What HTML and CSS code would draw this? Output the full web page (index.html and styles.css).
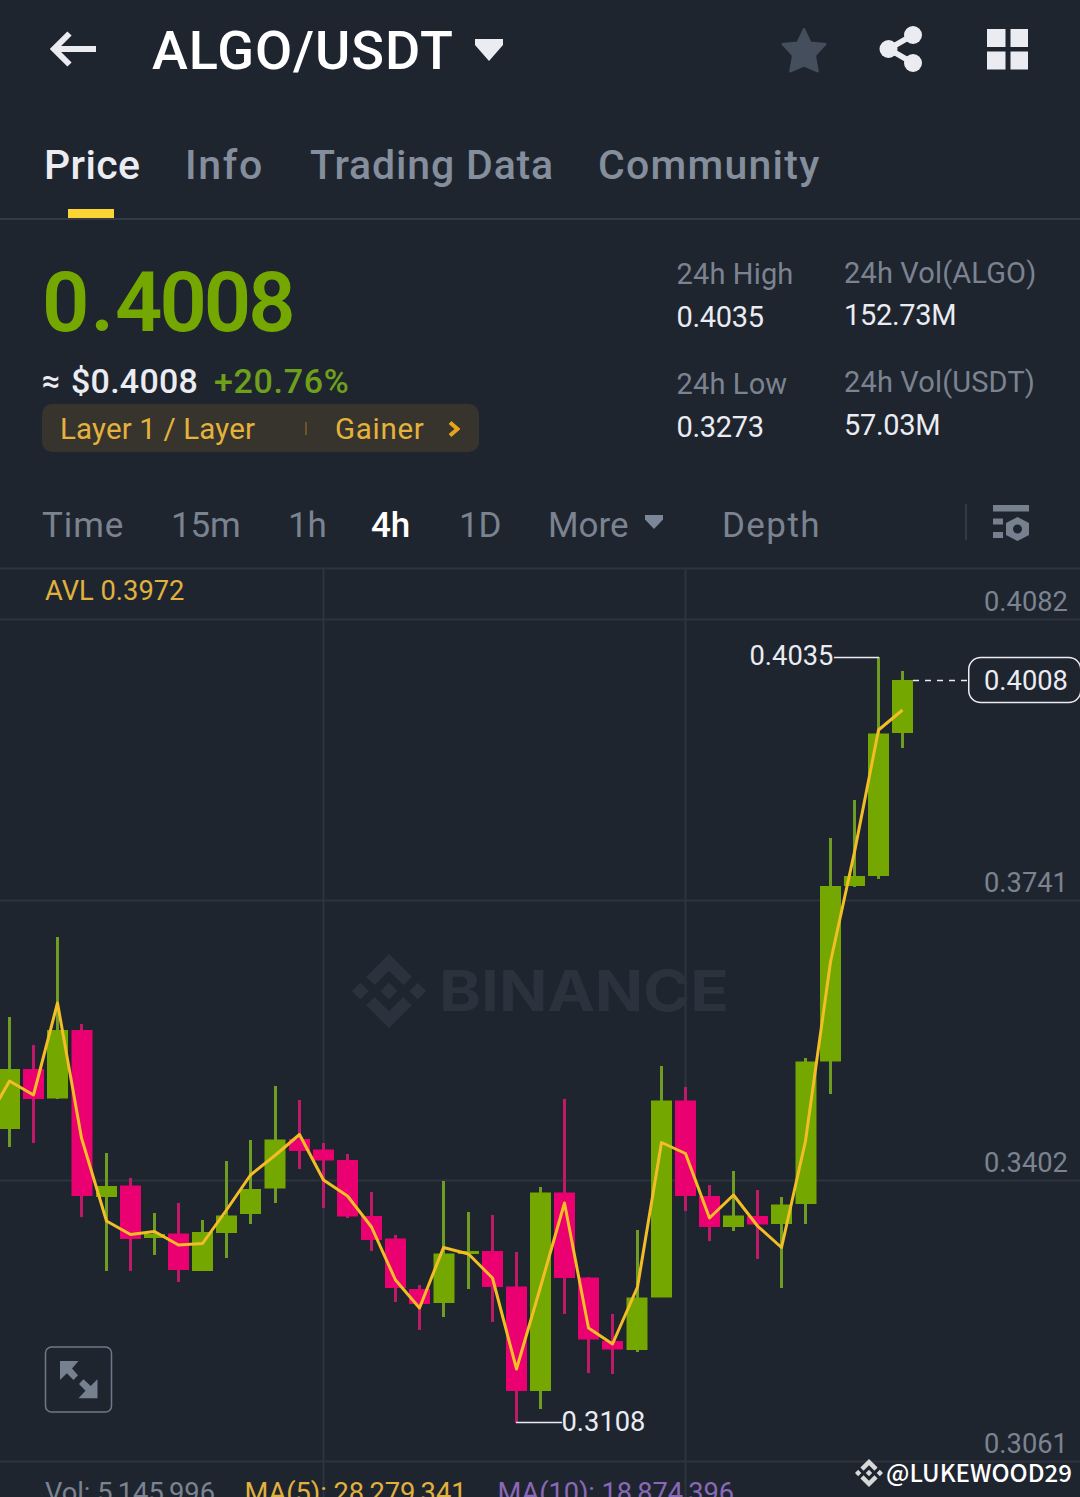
FILE: index.html
```html
<!DOCTYPE html>
<html lang="en">
<head>
<meta charset="utf-8">
<title>ALGO/USDT</title>
<link rel="stylesheet" href="styles.css">
</head>
<body>
<main class="app">
  <header class="topbar">
    <svg class="back" viewBox="0 0 48 38"><path d="M47 19H6M20.500 3.500L5 19l15.500 15.500"/></svg>
    <h1 class="pair">ALGO/USDT</h1>
    <svg class="pair-caret" viewBox="0 0 28 22"><path d="M0 0h28v6L14 22 0 6z"/></svg>
    <div class="actions">
      <svg class="star" viewBox="0 0 46 46"><path d="M23 2l6.500 13.500 15 1.500-10.500 11.500 2.800 16L23 38.500 9.200 44.500l2.800-16L1.500 17l15-1.500z"/></svg>
      <svg class="share" viewBox="0 0 44 46"><path d="M34 9L9.500 23 34 37"/><circle cx="9.500" cy="23" r="9"/><circle cx="34" cy="9" r="9"/><circle cx="34" cy="37" r="9"/></svg>
      <svg class="tiles" viewBox="0 0 42 41"><path d="M0 0h18.500v18H0zM23.500 0h17.500v18H23.500zM0 22.500h18.500v18H0zM23.500 22.500h17.500v18H23.500z"/></svg>
    </div>
  </header>

  <nav class="tabs">
    <a class="tab active">Price</a>
    <a class="tab info">Info</a>
    <a class="tab">Trading Data</a>
    <a class="tab community">Community</a>
  </nav>

  <section class="summary">
    <div class="quote">
      <div class="last">0<span class="dot">.</span>4008</div>
      <div class="fiat"><span class="approx">≈</span><span class="usd">$0.4008</span><span class="change">+20.76%</span></div>
      <div class="tags">
        <span class="tag-a">Layer 1 / Layer</span><i class="tag-sep"></i><span class="tag-b">Gainer</span>
        <svg class="chevron" viewBox="0 0 12 16"><path d="M2 1.500l7.500 6.500-7.500 6.500"/></svg>
      </div>
    </div>
    <dl class="stats">
      <div class="stat"><dt>24h High</dt><dd>0.4035</dd></div>
      <div class="stat"><dt>24h Low</dt><dd>0.3273</dd></div>
    </dl>
    <dl class="stats volumes">
      <div class="stat"><dt>24h Vol(ALGO)</dt><dd>152.73M</dd></div>
      <div class="stat"><dt>24h Vol(USDT)</dt><dd>57.03M</dd></div>
    </dl>
  </section>

  <nav class="frames">
    <a class="wide">Time</a>
    <a>15m</a>
    <a>1h</a>
    <a class="on">4h</a>
    <a>1D</a>
    <a class="more">More<svg viewBox="0 0 18 14"><path d="M0 0h18v4.500L9 14 0 4.500z"/></svg></a>
    <a class="wide depth">Depth</a>
    <i class="rule"></i>
    <svg class="settings" viewBox="0 0 36 36"><path d="M0 0h36v6.500H0zM0 13.500h10v6H0zM0 27h10v6H0zM24.500 12l11.500 6v12l-11.500 6-11.500-6V18zM24.500 19.500a4.500 4.500 0 100 9 4.500 4.500 0 000-9z"/></svg>
  </nav>

  <svg class="chart" viewBox="0 567 1080 930">
    <defs>
      <path id="mark" d="M38.730 53.200l24.590-24.580 24.600 24.600 14.300-14.310L63.320 0l-38.900 38.900zM0 63.310L14.300 49l14.310 14.310-14.310 14.300zM38.730 73.410L63.320 98l24.600-24.600 14.310 14.290-38.900 38.910-38.910-38.880zM98 63.310L112.310 49l14.300 14.300-14.310 14.320zM77.830 63.300L63.320 48.780 48.810 63.280l14.510 14.500z"/>
    </defs>
    <path class="grid" d="M0 568.500H1080M0 619.500H1080M0 900.500H1080M0 1180.500H1080M0 1461.500H1080M323.500 569V1497M685.500 569V1497"/>
    <g class="brand">
      <use href="#mark" transform="translate(352 954) scale(.585)"/>
      <text x="439" y="1011" textLength="290" lengthAdjust="spacingAndGlyphs">BINANCE</text>
    </g>
    <path class="wick up" d="M9.500 1017V1147M57.500 937V1099M106.500 1153V1271M154.500 1213V1255M202.500 1220V1271M226.500 1161V1258M250.500 1140V1224M275.500 1086V1203M443.500 1181V1317M468.500 1212V1289M540.500 1187V1409M637.500 1230V1352M661.500 1066V1297M733.500 1171V1231M781.500 1197V1288M805.500 1058V1224M830.500 838V1094M854.500 800V887M878.500 657V879M902.500 671V748"/>
    <path class="wick down" d="M33.500 1045V1143M81.500 1024V1217M130.500 1178V1271M178.500 1203V1282M299.500 1100V1169M323.500 1143V1208M347.500 1154V1218M371.500 1192V1251M395.500 1235V1302M419.500 1285V1330M492.500 1215V1322M516.500 1252V1423M564.500 1099V1314M588.500 1277V1373M612.500 1314V1374M685.500 1087V1211M709.500 1185V1241M757.500 1190V1259"/>
    <path class="body up" d="M9.500 1069V1129M57.500 1030V1098.500M106.500 1186V1197M154.500 1234V1238M202.500 1232V1271M226.500 1215.500V1233M250.500 1189V1214M275 1139.500V1188.500M444 1253.500V1303M468.500 1251V1254M540.500 1192.500V1391M637 1297.500V1350M661.500 1100.500V1297.500M733.500 1215.500V1227M781.500 1204.500V1224M806 1061.500V1204M830.500 886V1061.500M854.500 876V886M878.500 733.500V876M902.500 680V733"/>
    <path class="body down" d="M33.500 1069V1099M82 1030V1196M130.500 1185.500V1239M178.500 1233.500V1270M299.500 1139V1151M323.500 1149.500V1160.500M347.500 1160V1216.500M371.500 1216V1240M395.500 1238.500V1288M419.500 1289V1304M492.500 1251V1287M516.500 1286.500V1391M564.500 1192.500V1278M588.500 1277.500V1339.500M612.500 1341V1349.500M685.500 1100.500V1196M709.500 1196V1227M757.500 1216V1224.500"/>
    <polyline class="avg" points="-1,1099.500 9.500,1081 33.500,1095 57.500,1003 81.500,1138 106.500,1221 130.500,1234.500 154.500,1231.500 178.500,1245 202.500,1243.500 226.500,1210 250.500,1175 275.500,1155 299.500,1134.500 323.500,1180 347.500,1196 371.500,1227 395.500,1280 419.500,1308 443.500,1247.500 468.500,1254 492.500,1278 516.500,1369 540.500,1287 564.500,1203 588.500,1328 612.500,1344 637.500,1287 661.500,1142.500 685.500,1153.500 709.500,1218 733.500,1195 757.500,1226 781.500,1247.500 805.500,1141 830.500,962 854.500,852 878.500,730 902.500,710"/>
    <path class="callout" d="M834 657.500H879M516 1422.500H562"/>
    <path class="callout dashed" d="M913 680.500H968"/>
    <rect class="callout box" x="968.750" y="657.500" width="112" height="45" rx="12"/>
    <g class="axis">
      <text x="984" y="611">0.4082</text>
      <text x="984" y="892">0.3741</text>
      <text x="984" y="1172">0.3402</text>
      <text x="984" y="1453">0.3061</text>
    </g>
    <g class="marks">
      <text x="749.500" y="665">0.4035</text>
      <text x="561.500" y="1431">0.3108</text>
      <text x="984" y="690">0.4008</text>
    </g>
    <text class="gold" x="45" y="600">AVL 0.3972</text>
    <text class="muted" x="45" y="1501.500" textLength="170">Vol: 5,145,996</text>
    <text class="gold" x="244.500" y="1501.500" textLength="222">MA(5): 28,279,341</text>
    <text class="violet" x="497.500" y="1501.500" textLength="236.500">MA(10): 18,874,396</text>
    <g class="expand">
      <rect x="45.500" y="1347" width="66" height="65" rx="6"/>
      <path d="M60 1361H78.500L72 1368.500 78 1375.300 73.500 1380 66.800 1373.300 60 1380zM97.500 1398.200H78.500L85.500 1390.700 79 1383.900 83.500 1379.200 90.700 1385.900 97.500 1379.200z"/>
    </g>
    <g class="author">
      <use href="#mark" transform="translate(855 1459) scale(.221)"/>
      <text x="886" y="1481.500" textLength="186">@LUKEWOOD29</text>
    </g>
  </svg>
</main>
</body>
</html>
```
FILE: styles.css
```css
* { box-sizing: border-box; }

body {
  margin: 0;
  background: #1f252f;
  color: #eaecf2;
  font-family: Roboto, "Noto Sans", sans-serif;
}

.app {
  width: 1080px;
  height: 1497px;
  overflow: hidden;
  display: flex;
  flex-direction: column;
}

svg { display: block; flex: none; }
h1, dl, dd, dt { margin: 0; }

/* Top bar */
.topbar {
  height: 118px;
  padding: 0 51px 20px 49px;
  display: flex;
  align-items: center;
}
.back { width: 48px; height: 38px; fill: none; stroke: #eaecf2; stroke-width: 6; }
.pair { margin-left: 55px; width: 323px; font-size: 54px; line-height: 64px; font-weight: 500; letter-spacing: 0.950px; color: #fff; white-space: nowrap; padding-top: 4px; }
.pair-caret { width: 28px; height: 22px; margin-top: 2px; fill: #eaecf2; }
.actions { margin-left: auto; display: flex; align-items: center; }
.star { width: 46px; height: 46px; margin-top: 1px; fill: #444e5d; stroke: #444e5d; stroke-width: 2; stroke-linejoin: round; }
.share { width: 44px; height: 46px; margin: 0 64px 0 52px; fill: #eaecf2; }
.share path { fill: none; stroke: #eaecf2; stroke-width: 5.500; }
.tiles { width: 42px; height: 41px; fill: #eaecf2; }

/* Section tabs */
.tabs {
  height: 102px;
  padding: 23px 0 0 44px;
  display: grid;
  grid-template-columns: 141px 125px 288px auto;
  border-bottom: 2px solid #333a45;
  font-size: 41px;
  line-height: 48px;
  font-weight: 500;
  letter-spacing: 0.850px;
  color: #848e9c;
}
.tab { display: flex; flex-direction: column; white-space: nowrap; align-items: flex-start; }
.tab.active { color: #eaecf2; letter-spacing: 0.400px; }
.tab.active::after { content: ""; width: 46px; height: 9px; margin: 20px 0 0 24px; background: #fcd535; }
.tab.info { letter-spacing: 1.700px; }
.tab.community { letter-spacing: 1.250px; }

/* Price summary */
.summary { height: 262px; display: flex; padding: 0 0 0 42px; }
.quote { width: 634.500px; }
.last { margin-top: 32px; height: 101px; font-size: 83px; line-height: 102px; font-weight: 600; color: #74a800; letter-spacing: -3px; }
.dot { margin: 0 4px; }
.fiat { height: 51px; padding-top: 7px; display: flex; font-size: 34px; line-height: 42px; font-weight: 500; }
.approx { width: 29px; font-size: 32px; }
.usd { width: 143px; letter-spacing: 0.250px; }
.change { color: #6ea01c; letter-spacing: 0.700px; }
.tags { width: 437px; height: 48px; padding: 1px 18px 0; display: flex; align-items: center; border-radius: 10px; background: #37342d; color: #e5b23c; font-size: 29.500px; white-space: nowrap; }
.tag-a { width: 245px; letter-spacing: 0.150px; }
.tag-sep { width: 2px; height: 13px; margin-right: 28px; background: #6d5526; }
.tag-b { width: 113px; letter-spacing: 0.700px; }
.chevron { width: 12px; height: 16px; fill: none; stroke: #e5a41c; stroke-width: 4; }
.stats { width: 167.500px; padding-top: 33px; }
.stat { height: 110px; white-space: nowrap; font-size: 29px; letter-spacing: 0.150px; }
.stat dt { line-height: 42px; color: #7b8390; }
.stat dd { line-height: 44px; color: #eaecf2; letter-spacing: -0.300px; }
.volumes { padding-top: 32px; width: auto; }
.volumes dd { line-height: 42px; }
.volumes .stat + .stat dd { line-height: 44px; }
.volumes .stat { height: 109px; }

/* Interval selector */
.frames {
  height: 85px;
  padding: 23px 0 0 42px;
  display: grid;
  grid-template-columns: 129px 117px 83px 88px 89px 174px 243px 28px 36px;
  font-size: 35px;
  line-height: 42px;
  color: #7b8390;
}
.frames a { white-space: nowrap; letter-spacing: -0.200px; }
.frames .on { color: #fff; font-weight: 500; }
.frames .wide { letter-spacing: 0.900px; }
.frames .depth { letter-spacing: 1.400px; }
.frames .more { display: flex; letter-spacing: 0; }
.more svg { width: 18px; height: 14px; margin: 10px 0 0 16px; fill: #7b8798; }
.rule { width: 2px; height: 36px; margin-top: -1px; background: #333a45; }
.settings { width: 36px; height: 36px; fill: #76808f; fill-rule: evenodd; }

/* Candlestick chart */
.chart { width: 1080px; height: 930px; font-family: Roboto, sans-serif; font-size: 27.300px; }
.grid { fill: none; stroke: #2d343f; stroke-width: 2; }
.brand { fill: #2c323d; }
.brand text { font: 700 56px Inter, sans-serif; }
.wick, .body { fill: none; stroke-width: 3; }
.wick.up { stroke: #6f9d24; }
.wick.down { stroke: #bf1a69; }
.body { stroke-width: 21; }
.body.up { stroke: #74a800; }
.body.down { stroke: #ea0070; }
.avg { fill: none; stroke: #f3bd26; stroke-width: 3; stroke-linejoin: round; }
.callout { fill: none; stroke: #eaecf2; stroke-width: 1.500; }
.dashed { stroke-dasharray: 6 6; }
.axis, .muted { fill: #7b8390; }
.marks { fill: #eaecf2; }
.gold { fill: #e0b13c; }
.violet { fill: #8a68b8; }
.expand rect { fill: none; stroke: #6f7888; stroke-width: 1.500; }
.expand path { fill: #76808f; }
.author { fill: #d8d8d8; }
.author text { fill: #fff; font: 500 24px "Noto Sans CJK SC", "Noto Sans", sans-serif; }
```
